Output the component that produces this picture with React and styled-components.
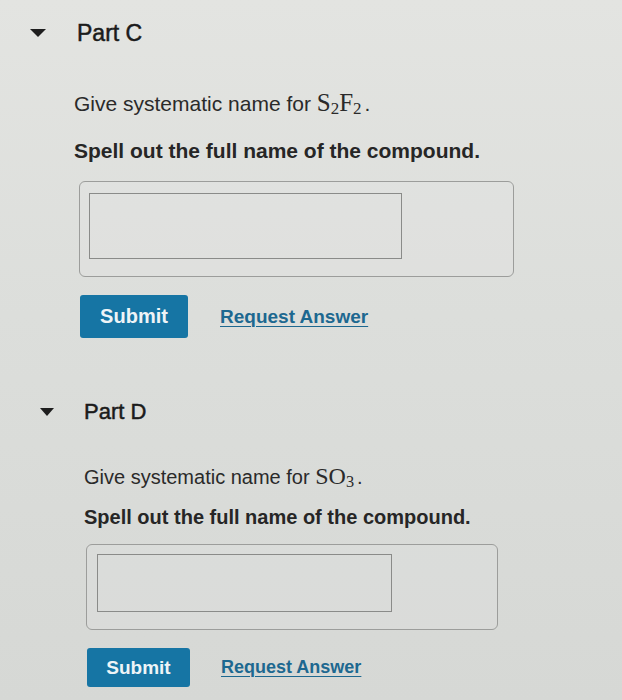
import React from 'react';
import styled, { createGlobalStyle } from 'styled-components';

const GlobalStyle = createGlobalStyle`
	html, body {
		margin: 0;
		padding: 0;
	}
	body {
		width: 622px;
		height: 700px;
		overflow: hidden;
		background: linear-gradient(180deg, #e3e4e1 0%, #dcdedb 45%, #d6d8d5 100%);
		font-family: 'Liberation Sans', Arial, sans-serif;
		color: #232323;
	}
`;

const Page = styled.div`
	display: flex;
	flex-direction: column;
	padding-top: 18px;
`;

const Section = styled.section`
	display: flex;
	flex-direction: column;
	padding-left: ${(p) => p.$left}px;
	margin-bottom: ${(p) => p.$after}px;
`;

const Header = styled.div`
	display: flex;
	align-items: center;
	height: 30px;
	gap: ${(p) => p.$gap}px;
`;

const Caret = styled.span`
	width: 0;
	height: 0;
	border-left: ${(p) => p.$w / 2}px solid transparent;
	border-right: ${(p) => p.$w / 2}px solid transparent;
	border-top: 8px solid #1e1e1e;
`;

const Title = styled.h2`
	margin: 0;
	font-size: ${(p) => p.$size}px;
	font-weight: 400;
	color: #1b1b1b;
	-webkit-text-stroke: 0.5px #1b1b1b;
`;

const Body = styled.div`
	display: flex;
	flex-direction: column;
	padding-left: 44px;
`;

const Question = styled.p`
	margin: ${(p) => p.$top}px 0 0;
	font-size: ${(p) => p.$size}px;
	line-height: 26px;
	color: #2a2a2a;
`;

const Formula = styled.span`
	font-family: 'Liberation Serif', 'Times New Roman', serif;
	font-size: ${(p) => p.$size}px;
	color: #2a2a2a;

	sub {
		font-size: 0.68em;
		vertical-align: -0.18em;
		line-height: 0;
	}
`;

const Period = styled.span`
	margin-left: 3px;
`;

const Instruction = styled.p`
	margin: ${(p) => p.$top}px 0 0;
	font-size: ${(p) => p.$size}px;
	font-weight: 700;
	line-height: 26px;
	color: #262626;
`;

const AnswerBox = styled.div`
	box-sizing: border-box;
	margin: ${(p) => p.$top}px 0 0 ${(p) => p.$shift}px;
	width: ${(p) => p.$w}px;
	height: ${(p) => p.$h}px;
	padding: ${(p) => p.$padTop}px 0 0 ${(p) => p.$padLeft}px;
	border: 1.5px solid #9c9d9b;
	border-radius: 6px;
	background: rgba(236, 237, 234, 0.15);
`;

const AnswerInput = styled.div`
	box-sizing: border-box;
	width: ${(p) => p.$w}px;
	height: ${(p) => p.$h}px;
	border: 1.5px solid #8a8b89;
	background: transparent;
`;

const Actions = styled.div`
	display: flex;
	align-items: center;
	margin: 18px 0 0 ${(p) => p.$shift}px;
	gap: ${(p) => p.$gap}px;
`;

const SubmitButton = styled.button`
	width: ${(p) => p.$w}px;
	height: ${(p) => p.$h}px;
	border: none;
	border-radius: 3px;
	background: #1675a4;
	color: #eef4f7;
	font-family: inherit;
	font-size: ${(p) => p.$size}px;
	font-weight: 700;
	cursor: pointer;
`;

const RequestLink = styled.a`
	font-size: ${(p) => p.$size}px;
	font-weight: 700;
	color: #1d6890;
	text-decoration: underline;
	text-decoration-thickness: 1px;
	text-underline-offset: 3px;
	cursor: pointer;
`;

const parts = [
	{
		id: 'C',
		left: 30,
		after: 59,
		caret: 16,
		gap: 31,
		title: 23,
		text: 21,
		formula: 25,
		qTop: 42,
		iTop: 21,
		formulaNode: (
			<>
				S<sub>2</sub>F<sub>2</sub>
			</>
		),
		box: { top: 17, shift: 5, w: 435, h: 96, padTop: 11, padLeft: 9, iw: 313, ih: 66 },
		btn: { w: 108, h: 43, size: 20, gap: 32, shift: 6 },
		link: 19,
	},
	{
		id: 'D',
		left: 40,
		after: 0,
		caret: 15,
		gap: 30,
		title: 22,
		text: 20,
		formula: 24,
		qTop: 36,
		iTop: 14,
		formulaNode: (
			<>
				SO<sub>3</sub>
			</>
		),
		box: { top: 14, shift: 2, w: 412, h: 86, padTop: 9, padLeft: 10, iw: 295, ih: 58 },
		btn: { w: 103, h: 39, size: 19, gap: 31, shift: 3 },
		link: 18,
	},
];

const Part = ({ part }) => (
	<Section $left={part.left} $after={part.after}>
		<Header $gap={part.gap}>
			<Caret $w={part.caret} />
			<Title $size={part.title}>Part {part.id}</Title>
		</Header>
		<Body>
			<Question $top={part.qTop} $size={part.text}>
				Give systematic name for <Formula $size={part.formula}>{part.formulaNode}</Formula>
				<Period>.</Period>
			</Question>
			<Instruction $top={part.iTop} $size={part.text}>
				Spell out the full name of the compound.
			</Instruction>
			<AnswerBox
				$top={part.box.top}
				$shift={part.box.shift}
				$w={part.box.w}
				$h={part.box.h}
				$padTop={part.box.padTop}
				$padLeft={part.box.padLeft}
			>
				<AnswerInput $w={part.box.iw} $h={part.box.ih} />
			</AnswerBox>
			<Actions $gap={part.btn.gap} $shift={part.btn.shift}>
				<SubmitButton $w={part.btn.w} $h={part.btn.h} $size={part.btn.size}>
					Submit
				</SubmitButton>
				<RequestLink $size={part.link}>Request Answer</RequestLink>
			</Actions>
		</Body>
	</Section>
);

const App = () => (
	<>
		<GlobalStyle />
		<Page>
			{parts.map((part) => (
				<Part key={part.id} part={part} />
			))}
		</Page>
	</>
);

export default App;
